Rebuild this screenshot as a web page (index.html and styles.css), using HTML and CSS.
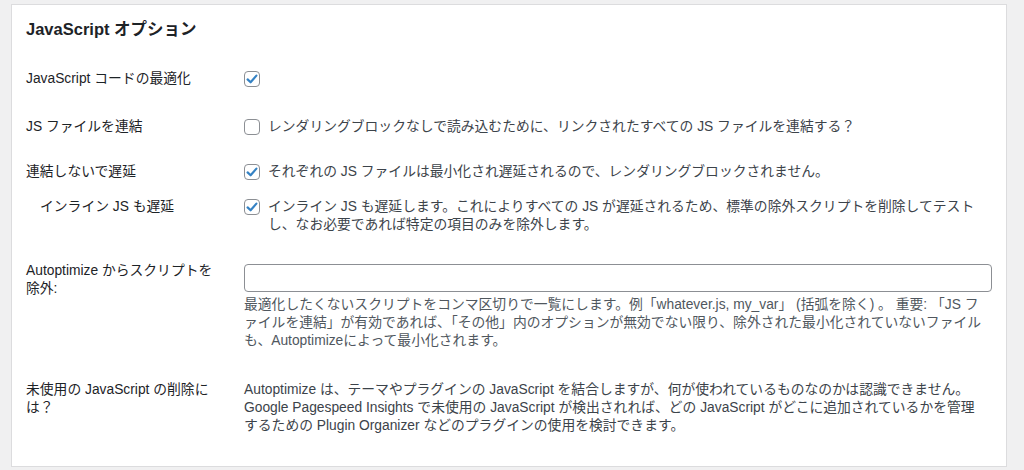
FILE: index.html
```html
<!DOCTYPE html>
<html lang="ja">
<head>
<meta charset="utf-8">
<title>JavaScript オプション</title>
<link rel="stylesheet" href="styles.css">
</head>
<body>
<div class="panel">
  <h2 class="panel-title">JavaScript オプション</h2>

  <div class="row r1">
    <div class="label">JavaScript コードの最適化</div>
    <div class="field">
      <span class="check checked"><svg viewBox="0 0 16 16" width="16" height="16"><path d="M3.6 8.4 L6.6 11.3 L12.4 4.6" fill="none" stroke="#3582c4" stroke-width="2.2" stroke-linecap="round" stroke-linejoin="round"/></svg></span>
    </div>
  </div>

  <div class="row r2">
    <div class="label">JS ファイルを連結</div>
    <div class="field option">
      <span class="check"></span>
      <span class="opt-text">レンダリングブロックなしで読み込むために、リンクされたすべての JS ファイルを連結する？</span>
    </div>
  </div>

  <div class="row r3">
    <div class="label">連結しないで遅延</div>
    <div class="field option">
      <span class="check checked"><svg viewBox="0 0 16 16" width="16" height="16"><path d="M3.6 8.4 L6.6 11.3 L12.4 4.6" fill="none" stroke="#3582c4" stroke-width="2.2" stroke-linecap="round" stroke-linejoin="round"/></svg></span>
      <span class="opt-text">それぞれの JS ファイルは最小化され遅延されるので、レンダリングブロックされません。</span>
    </div>
  </div>

  <div class="row r4">
    <div class="label sub">インライン JS も遅延</div>
    <div class="field option">
      <span class="check checked"><svg viewBox="0 0 16 16" width="16" height="16"><path d="M3.6 8.4 L6.6 11.3 L12.4 4.6" fill="none" stroke="#3582c4" stroke-width="2.2" stroke-linecap="round" stroke-linejoin="round"/></svg></span>
      <span class="opt-text">インライン JS も遅延します。これによりすべての JS が遅延されるため、標準の除外スクリプトを削除してテスト<br>し、なお必要であれば特定の項目のみを除外します。</span>
    </div>
  </div>

  <div class="row r5">
    <div class="label">Autoptimize からスクリプトを<br>除外:</div>
    <div class="field stack">
      <input class="text-input" type="text" value="">
      <p class="desc">最適化したくないスクリプトをコンマ区切りで一覧にします。例「whatever.js, my_var」 (括弧を除く) 。 重要: 「JS フ<br>ァイルを連結」が有効であれば、「その他」内のオプションが無効でない限り、除外された最小化されていないファイル<br>も、Autoptimizeによって最小化されます。</p>
    </div>
  </div>

  <div class="row r6">
    <div class="label">未使用の JavaScript の削除に<br>は？</div>
    <div class="field">
      <p class="info">Autoptimize は、テーマやプラグインの JavaScript を結合しますが、何が使われているものなのかは認識できません。<br>Google Pagespeed Insights で未使用の JavaScript が検出されれば、どの JavaScript がどこに追加されているかを管理<br>するための Plugin Organizer などのプラグインの使用を検討できます。</p>
    </div>
  </div>
</div>
</body>
</html>
```

FILE: styles.css
```css
html, body {
  margin: 0;
  padding: 0;
  background: #f0f0f1;
}

body {
  font-family: "Liberation Sans", "Noto Sans CJK JP", sans-serif;
  font-size: 13.8px;
  color: #1d2327;
  padding-top: 4px;
}

.panel {
  margin-left: 11px;
  width: 996px;
  box-sizing: border-box;
  height: 463px;
  background: #fff;
  border: 1px solid #dcdcde;
  padding: 0 14px 30px 14px;
}

.panel-title {
  margin: 13px 0 0;
  font-size: 16.5px;
  line-height: 22px;
  font-weight: 700;
  color: #1d2327;
}

.row {
  display: grid;
  grid-template-columns: 218px 1fr;
  line-height: 18px;
}

.r1 { margin-top: 30px; }
.r2 { margin-top: 30px; }
.r3 { margin-top: 27px; }
.r4 { margin-top: 17px; }
.r5 { margin-top: 28px; }
.r6 { margin-top: 31px; }

.label {
  white-space: nowrap;
  color: #1d2327;
}

.label.sub {
  padding-left: 14px;
}

.field {
  min-width: 0;
}

.option {
  display: flex;
  align-items: flex-start;
  gap: 8px;
}

.check {
  display: block;
  flex: none;
  width: 16px;
  height: 16px;
  margin-top: 1px;
  box-sizing: border-box;
  border: 1px solid #8c8f94;
  border-radius: 4px;
  background: #fff;
  position: relative;
}

.check svg {
  position: absolute;
  left: -1px;
  top: -1px;
}

.opt-text {
  color: #3c434a;
  white-space: nowrap;
}

.stack {
  display: flex;
  flex-direction: column;
}

.text-input {
  display: block;
  margin: 2px 0 0;
  width: 748px;
  height: 28px;
  box-sizing: border-box;
  border: 1px solid #8c8f94;
  border-radius: 4px;
  background: #fff;
  font: inherit;
  padding: 0 8px;
}

.desc {
  margin: 4px 0 0;
  color: #50575e;
  white-space: nowrap;
}

.info {
  margin: 0;
  color: #3c434a;
  white-space: nowrap;
}
```
